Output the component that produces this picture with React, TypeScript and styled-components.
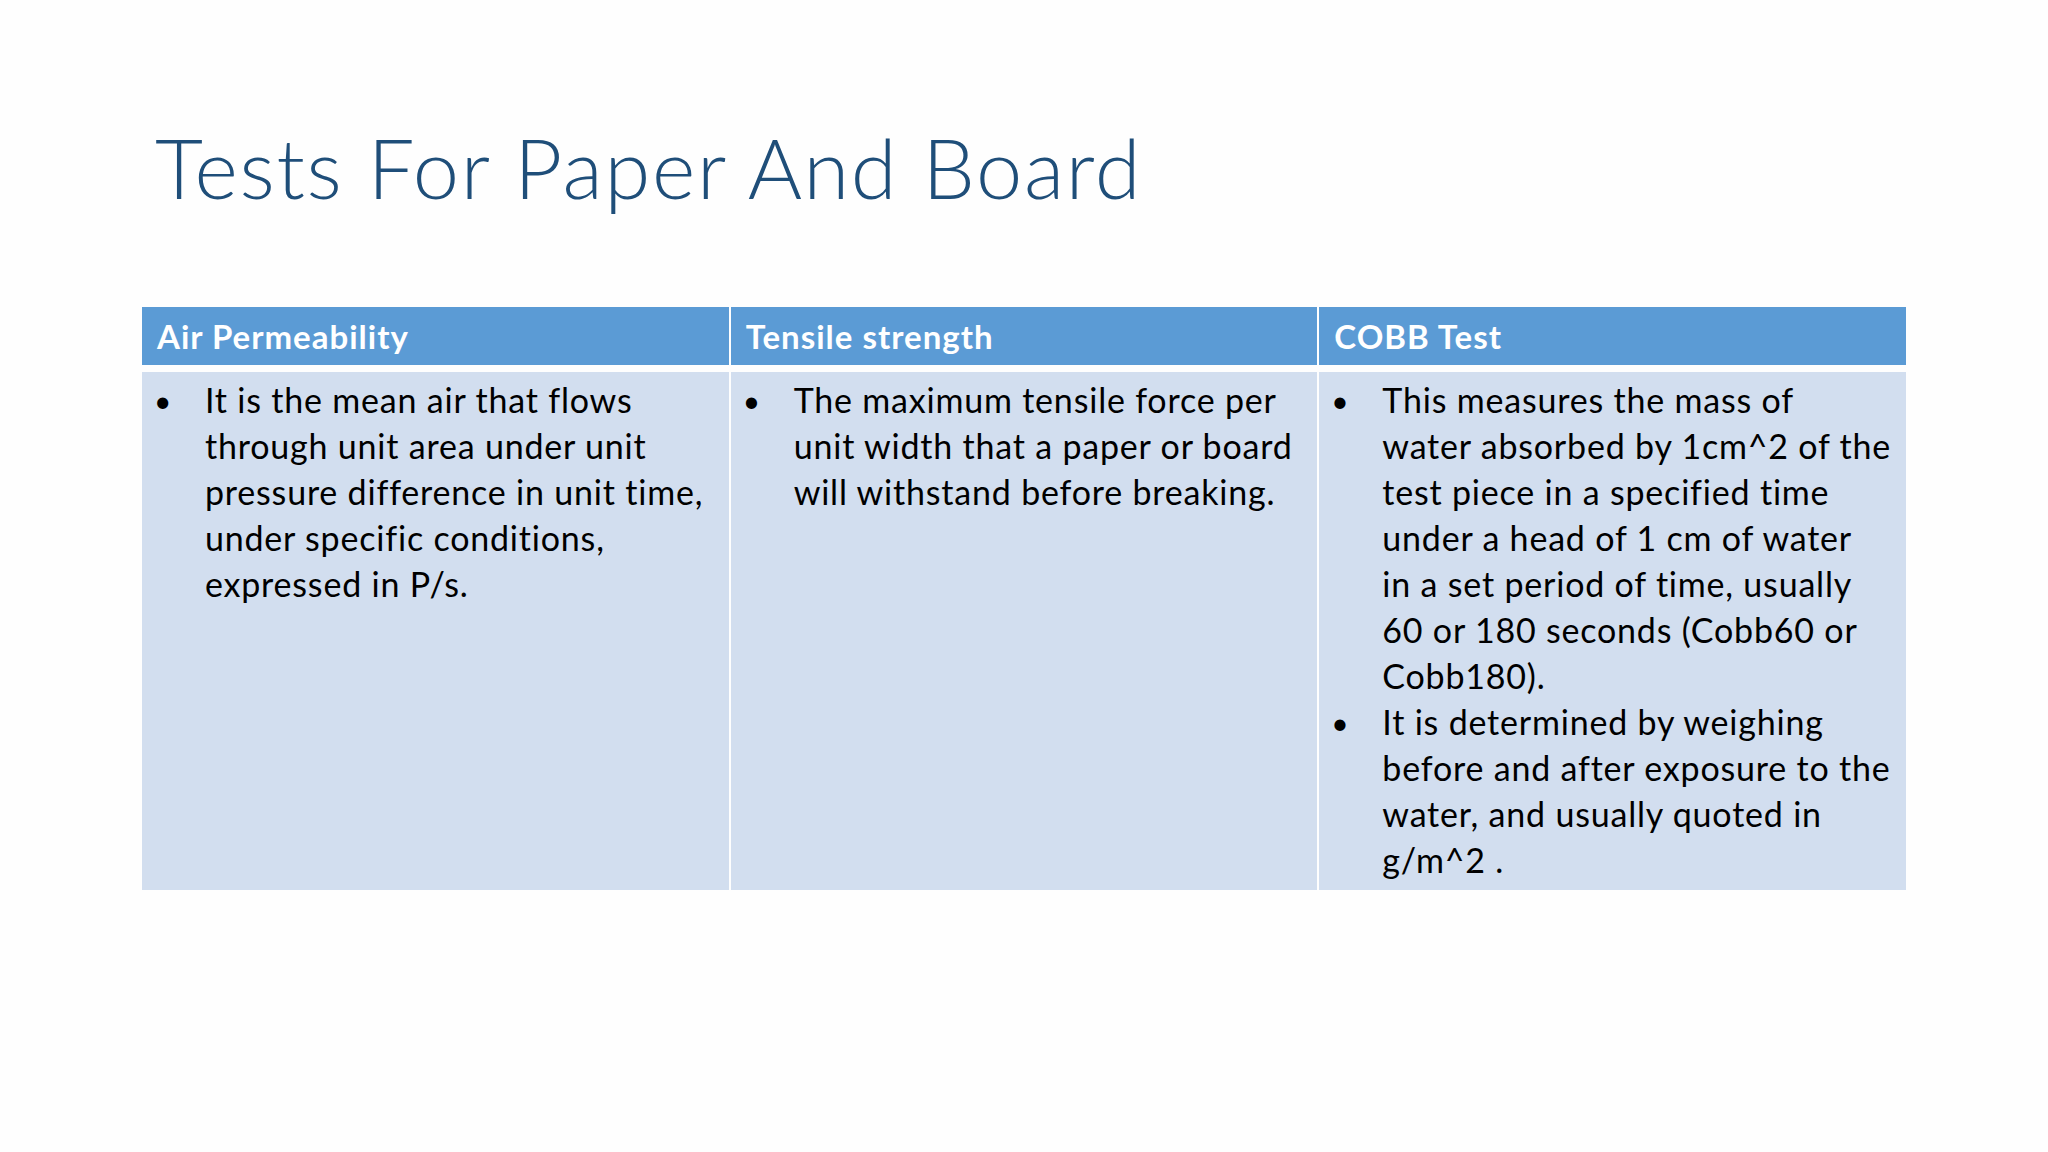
import React from "react";
import styled, { createGlobalStyle } from "styled-components";

const GlobalStyle = createGlobalStyle`
  html, body {
    margin: 0;
    padding: 0;
    background: #fefefe;
  }
  * { box-sizing: border-box; }
`;

const Slide = styled.main`
  width: 2048px;
  height: 1152px;
  padding: 126px 142px 0 142px;
  background: #fefefe;
  font-family: Lato, "Open Sans", sans-serif;
  overflow: hidden;
`;

const Title = styled.h1`
  margin: 0 0 99px 0;
  padding-left: 13px;
  font-family: Lato, "Open Sans", sans-serif;
  font-weight: 300;
  font-size: 83px;
  line-height: 82px;
  letter-spacing: 1.7px;
  color: #1f4e79;
  white-space: nowrap;
`;

const Table = styled.section`
  display: grid;
  grid-template-columns: repeat(3, 1fr);
  column-gap: 2px;
  row-gap: 7px;
  width: 1764px;
`;

const HeadCell = styled.div`
  height: 58px;
  padding: 0 0 0 15px;
  background: #5b9bd5;
  color: #ffffff;
  font-weight: 700;
  font-size: 33px;
  line-height: 58px;
  letter-spacing: 1px;
  white-space: nowrap;
`;

const BodyCell = styled.div`
  background: #d2deef;
  padding: 5px 0 7px 0;
`;

const BulletList = styled.ul`
  list-style: none;
  margin: 0;
  padding: 0;
`;

const Item = styled.li`
  display: grid;
  grid-template-columns: 51px 1fr;
  padding-left: 12px;
  color: #000000;
  font-size: 34px;
  line-height: 46px;
  letter-spacing: 0.8px;
`;

const Dot = styled.span`
  font-size: 30px;
`;

const Line = styled.span`
  display: block;
  white-space: nowrap;
`;

type Col = { title: string; items: string[][] };

const columns: Col[] = [
  {
    title: "Air Permeability",
    items: [
      [
        "It is the mean air that flows",
        "through unit area under unit",
        "pressure difference in unit time,",
        "under specific conditions,",
        "expressed in P/s.",
      ],
    ],
  },
  {
    title: "Tensile strength",
    items: [
      [
        "The maximum tensile force per",
        "unit width that a paper or board",
        "will withstand before breaking.",
      ],
    ],
  },
  {
    title: "COBB Test",
    items: [
      [
        "This measures the mass of",
        "water absorbed by 1cm^2 of the",
        "test piece in a specified time",
        "under a head of 1 cm of water",
        "in a set period of time, usually",
        "60 or 180 seconds (Cobb60 or",
        "Cobb180).",
      ],
      [
        "It is determined by weighing",
        "before and after exposure to the",
        "water, and usually quoted in",
        "g/m^2 .",
      ],
    ],
  },
];

export default function App() {
  return (
    <>
      <GlobalStyle />
      <Slide>
        <Title>Tests For Paper And Board</Title>
        <Table>
          {columns.map((c) => (
            <HeadCell key={c.title}>{c.title}</HeadCell>
          ))}
          {columns.map((c) => (
            <BodyCell key={c.title + "-body"}>
              <BulletList>
                {c.items.map((lines, i) => (
                  <Item key={i}>
                    <Dot>•</Dot>
                    <div>
                      {lines.map((l, j) => (
                        <Line key={j}>{l}</Line>
                      ))}
                    </div>
                  </Item>
                ))}
              </BulletList>
            </BodyCell>
          ))}
        </Table>
      </Slide>
    </>
  );
}
